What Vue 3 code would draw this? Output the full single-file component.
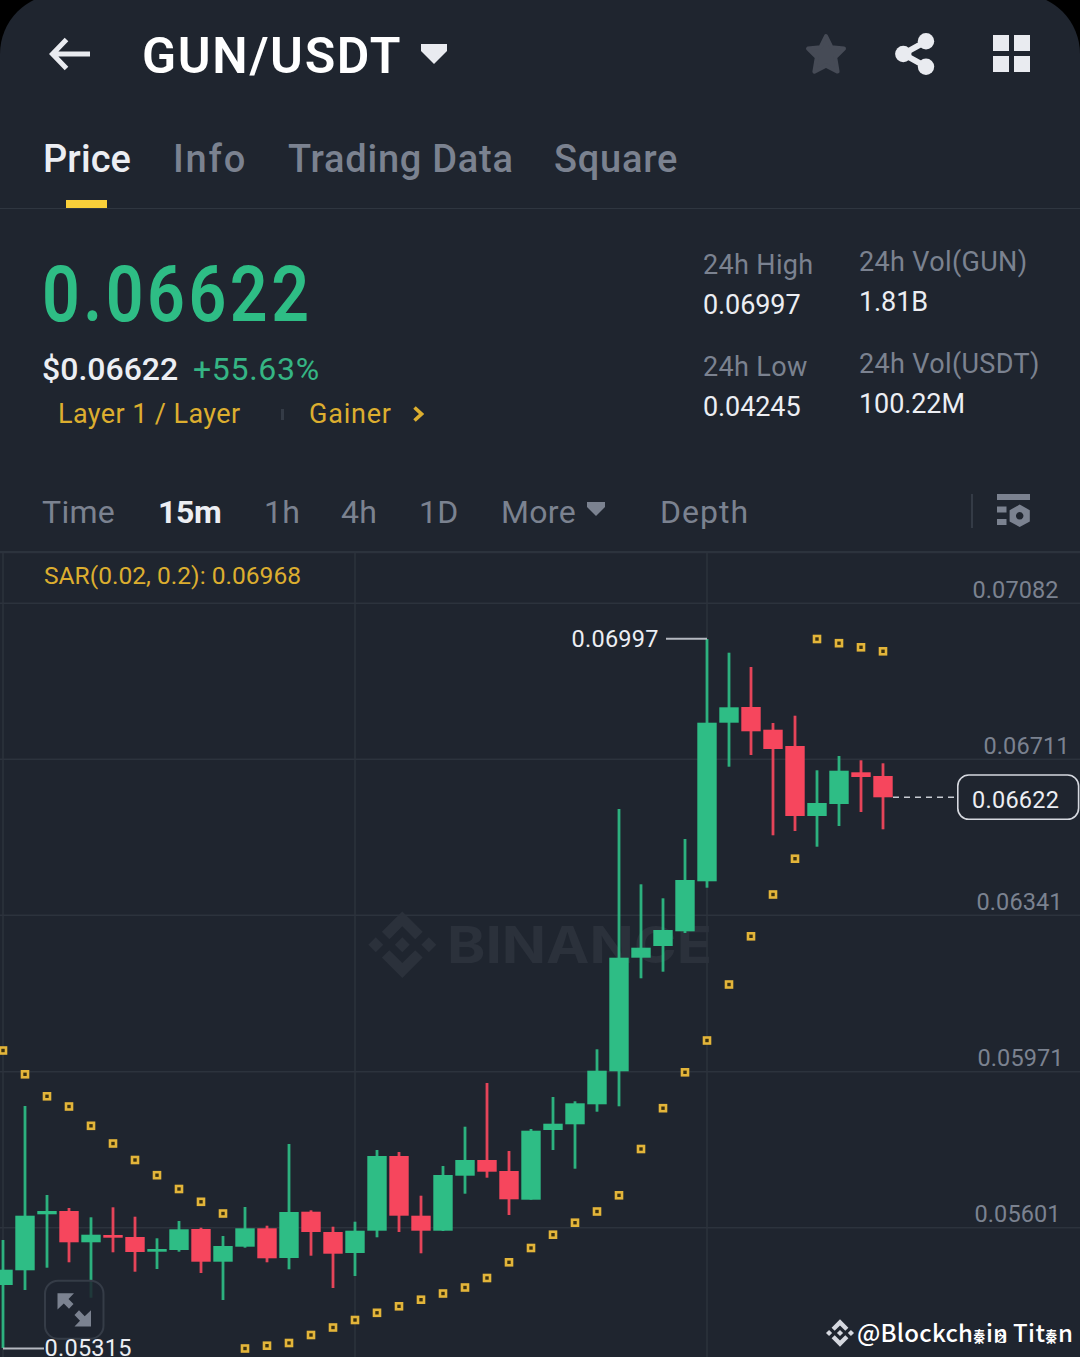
<script setup>
import { ref } from 'vue'

const tabs = ['Price', 'Info', 'Trading Data', 'Square']
const activeTab = ref('Price')

const periods = ['Time', '15m', '1h', '4h', '1D', 'More', 'Depth']
const activePeriod = ref('15m')

const stats = [
  [
    { label: '24h High', value: '0.06997' },
    { label: '24h Low', value: '0.04245' },
  ],
  [
    { label: '24h Vol(GUN)', value: '1.81B' },
    { label: '24h Vol(USDT)', value: '100.22M' },
  ],
]

// chart geometry: first candle at x = 3, one candle every 22px
const candleX = (i) => 3 + i * 22

// [up, wick top, body top, body bottom, wick bottom]
const candles = [
  [1, 1240, 1269.7, 1285, 1348],
  [1, 1106, 1215.7, 1270.3, 1290],
  [1, 1195, 1211, 1214.3, 1267.7],
  [0, 1208, 1211, 1242.3, 1262.3],
  [1, 1217.3, 1234.7, 1242.3, 1297.7],
  [0, 1207.3, 1235, 1237.7, 1252.3],
  [0, 1216.7, 1237, 1252, 1271.7],
  [1, 1238.3, 1249, 1251.7, 1269],
  [1, 1221, 1229.3, 1250, 1251.7],
  [0, 1227.7, 1229, 1261.7, 1273],
  [1, 1236, 1246, 1261.7, 1300],
  [1, 1207, 1228.3, 1246.7, 1247.7],
  [0, 1225.7, 1228.3, 1258.3, 1262.3],
  [1, 1144, 1212, 1258, 1269.3],
  [0, 1210.3, 1211.7, 1232, 1255.7],
  [0, 1226.7, 1232, 1253.7, 1288],
  [1, 1221.7, 1230.7, 1253, 1276],
  [1, 1150, 1156, 1230.7, 1237.3],
  [0, 1152, 1156, 1215.7, 1232],
  [0, 1195.7, 1215.7, 1230.7, 1253.3],
  [1, 1166, 1175, 1230.7, 1231],
  [1, 1126.7, 1160, 1175.7, 1193.7],
  [0, 1083, 1160, 1171.7, 1177.7],
  [0, 1151, 1171, 1199.3, 1215],
  [1, 1129, 1130.7, 1199.7, 1199.7],
  [1, 1097, 1123.7, 1130, 1150],
  [1, 1101.3, 1103.3, 1124.3, 1168.7],
  [1, 1049.3, 1070.7, 1104.3, 1111.7],
  [1, 809, 957.7, 1071.3, 1106.3],
  [1, 884.3, 947.7, 957.7, 978.3],
  [1, 898.3, 930, 946, 971.7],
  [1, 839, 880, 931.3, 933],
  [1, 639, 722.7, 881.3, 887.7],
  [1, 652.7, 707.3, 722.7, 766.7],
  [0, 667, 707, 731.3, 755],
  [0, 723, 729.7, 749, 835.3],
  [0, 715.7, 746, 816, 831],
  [1, 770.3, 803, 816, 846.7],
  [1, 756, 770.7, 804, 826],
  [0, 760.3, 772.3, 777, 812],
  [0, 763.3, 776, 797.3, 829.3],
]

const sar = [
  1050.5, 1074.3, 1096.3, 1106.5, 1125.8, 1143.5, 1160, 1175.2, 1189, 1201.8, 1213.5,
  1348.5, 1345.7, 1343, 1335, 1327.5, 1320, 1312.8, 1306.3, 1299.7, 1293.5, 1287.5,
  1278, 1262.3, 1248, 1234.7, 1222.7, 1211.5, 1195.3, 1149, 1108.2, 1072.3, 1040.5,
  984.5, 936.3, 894.5, 858.7, 639, 643.2, 647.3, 651.3,
]

const gridX = [3, 355, 707]
const gridY = [603.3, 759.3, 915.3, 1071.7, 1227.7]

const axis = [
  { x: 973, y: 598, text: '0.07082' },
  { x: 984, y: 754, text: '0.06711' },
  { x: 977, y: 910, text: '0.06341' },
  { x: 978, y: 1066, text: '0.05971' },
  { x: 975, y: 1222, text: '0.05601' },
]
</script>

<template>
  <div class="screen">
    <div class="page">
      <header class="header">
        <svg class="back" viewBox="0 0 42 34" width="42" height="34">
          <path d="M17.5 2.5 L3.5 17 L17.5 31.5 M4 17 H41" fill="none" stroke="#e9ebf0" stroke-width="5" />
        </svg>
        <h1 class="pair">GUN/USDT</h1>
        <svg class="caret" viewBox="0 0 26 20" width="26" height="20">
          <path d="M0 0 H26 V7 L13 20 L0 7 Z" fill="#e9ebf0" />
        </svg>
        <div class="actions">
          <svg viewBox="0 0 42 42" width="42" height="42">
            <path
              d="M21 3 L26.4 14.2 L39 15.6 L30.2 24.4 L32.6 38.6 L21 32.6 L9.4 38.6 L11.8 24.4 L3 15.6 L15.6 14.2 Z"
              fill="#464b56" stroke="#464b56" stroke-width="4" stroke-linejoin="round" />
          </svg>
          <svg viewBox="0 0 40 42" width="40" height="42">
            <path d="M31 8.3 L8.3 21 L31 33.7" fill="none" stroke="#e9ebf0" stroke-width="6" />
            <circle cx="8.3" cy="21" r="8.2" fill="#e9ebf0" />
            <circle cx="31" cy="8.3" r="8.2" fill="#e9ebf0" />
            <circle cx="31" cy="33.7" r="8.2" fill="#e9ebf0" />
          </svg>
          <svg viewBox="0 0 37 37" width="37" height="37">
            <path d="M0 0h16v16H0z M21 0h16v16H21z M0 21h16v16H0z M21 21h16v16H21z" fill="#e9ebf0" />
          </svg>
        </div>
      </header>

      <nav class="tabs">
        <button
          v-for="tab in tabs" :key="tab" class="tab"
          :class="{ active: tab === activeTab }" @click="activeTab = tab"
        >{{ tab }}</button>
      </nav>

      <section class="summary">
        <div class="quote">
          <div class="last">0.06622</div>
          <div class="fiat">
            <span class="usd">$0.06622</span>
            <span class="change">+55.63%</span>
          </div>
          <div class="tags">
            <span class="layer">Layer 1 / Layer</span>
            <i class="bar"></i>
            <span class="gainer">Gainer</span>
            <svg viewBox="0 0 11 16" width="11" height="16">
              <path d="M1.5 1.5 L8.5 8 L1.5 14.5" fill="none" stroke="#dcae2f" stroke-width="3.6" />
            </svg>
          </div>
        </div>
        <div v-for="(col, c) in stats" :key="c" class="stats">
          <div v-for="item in col" :key="item.label" class="stat">
            <div class="label">{{ item.label }}</div>
            <div class="value">{{ item.value }}</div>
          </div>
        </div>
      </section>

      <nav class="periods">
        <button
          v-for="p in periods" :key="p" class="period"
          :class="{ active: p === activePeriod }" @click="activePeriod = p"
        >{{ p }}<svg v-if="p === 'More'" class="more" viewBox="0 0 18 14" width="18" height="14">
          <path d="M0 0 H18 V5 L9 14 L0 5 Z" fill="#7b8290" />
        </svg></button>
        <div class="settings">
          <svg viewBox="0 0 33 34" width="33" height="34">
            <path d="M0 0h33v6H0z M0 12.5h9.5v6H0z M0 25h9.5v6H0z" fill="#7b8290" />
            <path
              d="M22.7 10.6 L32.8 16.2 V27.4 L22.7 33 L12.6 27.4 V16.2 Z M22.7 18.1 a3.7 3.7 0 1 0 0.01 0 Z"
              fill="#7b8290" fill-rule="evenodd" />
          </svg>
        </div>
      </nav>

      <svg class="chart" viewBox="0 551 1080 806" width="1080" height="806">
        <g class="grid">
          <line x1="0" x2="1080" y1="552" y2="552" class="top" />
          <line v-for="y in gridY" :key="'y' + y" x1="0" x2="1080" :y1="y" :y2="y" />
          <line v-for="x in gridX" :key="'x' + x" :x1="x" :x2="x" y1="553" y2="1357" />
        </g>

        <g class="watermark">
          <g transform="translate(402.3 944.7) scale(.34)">
            <path d="M-38 -16 L0 -54 L38 -16 L60 -38 L0 -98 L-60 -38 Z" />
            <path d="M-38 16 L0 54 L38 16 L60 38 L0 98 L-60 38 Z" />
            <path d="M0 -22 L22 0 L0 22 L-22 0 Z" />
            <path d="M-78 -22 L-56 0 L-78 22 L-100 0 Z" />
            <path d="M78 -22 L100 0 L78 22 L56 0 Z" />
          </g>
          <text x="447" y="963" textLength="265" lengthAdjust="spacingAndGlyphs">BINANCE</text>
        </g>

        <g v-for="(k, i) in candles" :key="i" :class="k[0] ? 'up' : 'down'">
          <rect :x="candleX(i) - 1.4" :y="k[1]" width="2.8" :height="k[4] - k[1]" class="wick" />
          <rect :x="candleX(i) - 9.7" :y="k[2]" width="19.4" :height="k[3] - k[2]" />
        </g>

        <rect v-for="(y, i) in sar" :key="'s' + i" :x="candleX(i) - 3" :y="y - 3" width="6" height="6" class="sar" />

        <text x="44" y="584.3" textLength="257" lengthAdjust="spacingAndGlyphs" class="sar-label">SAR(0.02, 0.2): 0.06968</text>

        <text v-for="a in axis" :key="a.text" :x="a.x - 0.5" :y="a.y" textLength="86" class="axis">{{ a.text }}</text>

        <line x1="666" x2="707" y1="638.8" y2="638.8" class="leader" />
        <text x="571.5" y="646.8" textLength="87" class="mark">0.06997</text>

        <line x1="893" x2="957" y1="797.3" y2="797.3" class="dash" />
        <rect x="957.8" y="775" width="120.8" height="44.3" rx="11" class="tag" />
        <text x="972" y="808" textLength="87" class="mark">0.06622</text>

        <rect x="45" y="1280.7" width="58.5" height="58" rx="13" class="expand" />
        <path d="M57.5 1293.3 H74 L68.5 1299 L73.5 1304 L69 1308.8 L63.8 1303.5 L57.5 1309.5 Z" fill="#7b8290" />
        <path d="M91 1326.5 H74.5 L80 1320.8 L74.5 1315 L79 1310.2 L84.7 1316.3 L91 1310.3 Z" fill="#7b8290" />

        <line x1="3" x2="44" y1="1348.5" y2="1348.5" class="leader" />
        <text x="44.5" y="1356" textLength="87" class="mark">0.05315</text>

        <g class="credit">
          <g transform="translate(840 1333) scale(.14)">
            <path d="M-38 -16 L0 -54 L38 -16 L60 -38 L0 -98 L-60 -38 Z" />
            <path d="M-38 16 L0 54 L38 16 L60 38 L0 98 L-60 38 Z" />
            <path d="M0 -22 L22 0 L0 22 L-22 0 Z" />
            <path d="M-78 -22 L-56 0 L-78 22 L-100 0 Z" />
            <path d="M78 -22 L100 0 L78 22 L56 0 Z" />
          </g>
          <text x="857" y="1341.7" textLength="116">@Blockch</text>
          <text x="973.5" y="1341.5" textLength="11.5" lengthAdjust="spacingAndGlyphs" class="tiny">秦</text>
          <text x="986" y="1341.7">i</text>
          <text x="993" y="1341.7">n</text>
          <text x="994.5" y="1341.5" textLength="11.5" lengthAdjust="spacingAndGlyphs" class="tiny low">之</text>
          <text x="1013" y="1341.7" textLength="32">Tit</text>
          <text x="1045.5" y="1341.5" textLength="11.5" lengthAdjust="spacingAndGlyphs" class="tiny">秦</text>
          <text x="1058" y="1341.7">n</text>
        </g>
      </svg>
    </div>
  </div>
</template>

<style>
body {
  background: #000;
}
</style>

<style scoped>
.screen {
  display: flow-root;
  width: 1080px;
  height: 1357px;
  overflow: hidden;
  background: #000;
  font-family: Roboto, "Noto Sans", sans-serif;
  color: #eceef3;
}

.page {
  height: 1363px;
  margin-top: -6px;
  padding-top: 6px;
  box-sizing: border-box;
  border-radius: 60px 60px 0 0;
  background: #1f252f;
  overflow: hidden;
}

.header {
  display: flex;
  align-items: center;
  height: 107px;
  padding: 0 50px 0 49px;
}

.pair {
  margin: 4px 0 0 51px;
  width: 279px;
  font-size: 50px;
  font-weight: 600;
  letter-spacing: 1.7px;
  color: #fff;
}

.actions {
  display: flex;
  align-items: center;
  margin-left: auto;
}

.actions svg:nth-child(2) {
  margin: 0 58px 0 48px;
}

button {
  padding: 0;
  border: 0;
  background: none;
  font: inherit;
  color: #7b8290;
  text-align: left;
  white-space: nowrap;
}

.tabs {
  display: grid;
  grid-template-columns: 130px 115px 266px auto;
  height: 101px;
  padding-left: 43px;
  border-bottom: 1px solid #2f3640;
}

.tab {
  position: relative;
  justify-self: start;
  padding-top: 2px;
  font-size: 38px;
  font-weight: 500;
  letter-spacing: 0.75px;
}

.tab:nth-child(2) {
  letter-spacing: 1.8px;
}

.tab.active {
  letter-spacing: 0.1px;
  color: #eceef3;
}

.tab.active::after {
  content: "";
  position: absolute;
  left: 23px;
  bottom: 0;
  width: 41px;
  height: 8px;
  background: #fad03a;
}

.summary {
  display: grid;
  grid-template-columns: 661px 155px auto;
  height: 261px;
  padding-left: 42px;
}

.last {
  margin-top: 46px;
  font-size: 77px;
  line-height: 80px;
  font-weight: 600;
  letter-spacing: 4.1px;
  color: #2ebd85;
  transform: scaleX(0.86);
  transform-origin: left;
}

.fiat {
  display: flex;
  height: 40px;
  margin-top: 14px;
  font-size: 32px;
  line-height: 40px;
}

.usd {
  width: 151px;
  font-weight: 500;
}

.change {
  letter-spacing: 0.7px;
  color: #35b584;
}

.tags {
  display: flex;
  align-items: center;
  height: 40px;
  margin-top: 5px;
  padding-left: 16px;
  font-size: 27px;
  line-height: 40px;
  color: #dcae2f;
}

.layer {
  width: 223px;
  letter-spacing: 0.4px;
}

.bar {
  width: 3px;
  height: 11px;
  background: #343b46;
}

.gainer {
  width: 104px;
  margin-left: 25px;
  letter-spacing: 0.8px;
}

.stats {
  padding: 36px 0 0;
}

.stats:last-child {
  padding: 33px 0 0 1px;
}

.stat {
  height: 102px;
  font-size: 27px;
  line-height: 40px;
}

.label {
  color: #7b8290;
  letter-spacing: 0.35px;
}

.value {
  letter-spacing: -0.1px;
}

.periods {
  display: grid;
  grid-template-columns: 116px 106px 77px 78px 82px 159px 311px auto;
  align-items: center;
  height: 81px;
  padding-left: 42px;
  font-size: 32px;
}

.period {
  padding-top: 3px;
  letter-spacing: 0.3px;
}

.period:nth-child(7) {
  letter-spacing: 1px;
}

.period.active {
  font-weight: 700;
  letter-spacing: -0.4px;
  color: #eceef3;
}

.more {
  margin-left: 11px;
  vertical-align: 7px;
}

.settings {
  display: flex;
  height: 34px;
  width: 33px;
  padding-left: 24px;
  border-left: 2px solid #343b46;
}

.chart {
  display: block;
}

.grid line {
  stroke: #2c333d;
  stroke-width: 1.5;
}

.grid .top {
  stroke-width: 2.5;
}

.watermark {
  fill: #2b313b;
}

.watermark text {
  font: 700 51px Inter, sans-serif;
}

.up {
  fill: #2ebd85;
}

.down {
  fill: #f6465d;
}

.wick {
  opacity: 0.92;
}

.sar {
  fill: #3a300f;
  stroke: #e3b53a;
  stroke-width: 2.6;
}

.sar-label {
  font-size: 24px;
  fill: #dcae2f;
}

.axis {
  font-size: 23.5px;
  fill: #7b8290;
}

.mark {
  font-size: 23.5px;
  fill: #eceef3;
}

.leader {
  stroke: #b4b8c0;
  stroke-width: 2;
}

.dash {
  stroke: #c8ccd3;
  stroke-width: 1.6;
  stroke-dasharray: 6 5;
}

.tag {
  fill: #1f252f;
  stroke: #d5d8df;
  stroke-width: 1.6;
}

.expand {
  fill: #1f252f;
  fill-opacity: 0.85;
  stroke: #353c47;
  stroke-width: 2;
}

.credit {
  fill: #d5d8df;
}

.credit text {
  font: 500 24px "Noto Sans CJK SC", sans-serif;
  fill: #fff;
}

.credit .tiny {
  font-size: 15px;
  font-weight: 700;
}

.credit .low {
  font-size: 10px;
}
</style>
